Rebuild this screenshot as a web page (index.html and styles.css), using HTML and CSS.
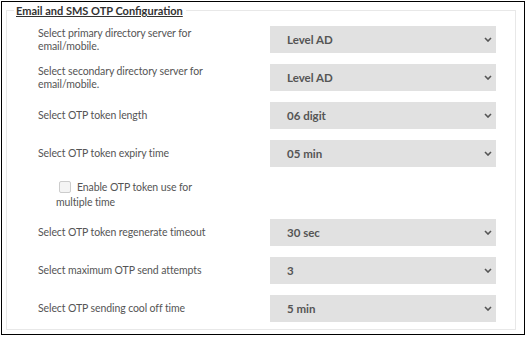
FILE: index.html
```html
<!DOCTYPE html>
<html lang="en">
<head>
    <meta charset="UTF-8">
    <title>OTP Configuration</title>
    <link rel="stylesheet" href="styles.css">
</head>
<body>
    <div class="frame">
        <fieldset class="otp-config">
            <legend>Email and SMS OTP Configuration</legend>

            <div class="row">
                <label>Select primary directory server for email/mobile.</label>
                <div class="select"><span>Level AD</span><svg width="8" height="5" viewBox="0 0 8 5"><path d="M1 1l3 3 3-3" fill="none" stroke="#555" stroke-width="1.6"/></svg></div>
            </div>
            <div class="row">
                <label>Select secondary directory server for email/mobile.</label>
                <div class="select"><span>Level AD</span><svg width="8" height="5" viewBox="0 0 8 5"><path d="M1 1l3 3 3-3" fill="none" stroke="#555" stroke-width="1.6"/></svg></div>
            </div>
            <div class="row">
                <label>Select OTP token length</label>
                <div class="select"><span>06 digit</span><svg width="8" height="5" viewBox="0 0 8 5"><path d="M1 1l3 3 3-3" fill="none" stroke="#555" stroke-width="1.6"/></svg></div>
            </div>
            <div class="row">
                <label>Select OTP token expiry time</label>
                <div class="select"><span>05 min</span><svg width="8" height="5" viewBox="0 0 8 5"><path d="M1 1l3 3 3-3" fill="none" stroke="#555" stroke-width="1.6"/></svg></div>
            </div>
            <div class="check-row">
                <span class="box"></span>Enable OTP token use for multiple time
            </div>
            <div class="row">
                <label>Select OTP token regenerate timeout</label>
                <div class="select"><span>30 sec</span><svg width="8" height="5" viewBox="0 0 8 5"><path d="M1 1l3 3 3-3" fill="none" stroke="#555" stroke-width="1.6"/></svg></div>
            </div>
            <div class="row">
                <label>Select maximum OTP send attempts</label>
                <div class="select"><span>3</span><svg width="8" height="5" viewBox="0 0 8 5"><path d="M1 1l3 3 3-3" fill="none" stroke="#555" stroke-width="1.6"/></svg></div>
            </div>
            <div class="row">
                <label>Select OTP sending cool off time</label>
                <div class="select"><span>5 min</span><svg width="8" height="5" viewBox="0 0 8 5"><path d="M1 1l3 3 3-3" fill="none" stroke="#555" stroke-width="1.6"/></svg></div>
            </div>
        </fieldset>
    </div>
</body>
</html>
```

FILE: styles.css
```css
body {
    margin: 0;
    background-color: #fff;
    font-family: 'Lato', sans-serif;
    font-size: 10.5px;
    letter-spacing: -0.1px;
    color: #555;
}

.frame {
    width: 522px;
    height: 332px;
    margin: 1px;
    border: 1px solid #000;
    padding: 0;
}

.otp-config {
    margin: 2px 8px 0 4px;
    height: 326px;
    padding: 9px 19px 0 31px;
    border: 1px solid #e8e8e8;
    display: flex;
    flex-direction: column;
    gap: 11px;
    box-sizing: border-box;
}

legend {
    margin-left: -24px;
    padding: 0 3px 0 2px;
    font-weight: bold;
    font-size: 11px;
    letter-spacing: 0;
    color: #333;
    text-decoration: underline;
}

.row {
    display: grid;
    grid-template-columns: 200px 226px;
    justify-content: space-between;
    align-items: center;
    min-height: 27px;
}

.row label {
    line-height: 13px;
    padding-right: 30px;
}

.select {
    height: 27px;
    background-color: #e1e1e1;
    display: flex;
    align-items: center;
    justify-content: space-between;
    padding: 0 4px 0 17px;
    font-weight: bold;
    font-size: 11.5px;
    letter-spacing: 0;
}

.check-row {
    width: 150px;
    height: 30px;
    margin-left: 18px;
    padding-top: 2px;
    box-sizing: border-box;
    line-height: 15px;
    text-indent: 3px;
}

.box {
    display: inline-block;
    width: 10px;
    height: 10px;
    border: 1px solid #ccc;
    border-radius: 2px;
    background-color: #f4f4f4;
    margin-right: 6px;
    vertical-align: -2px;
}
```
